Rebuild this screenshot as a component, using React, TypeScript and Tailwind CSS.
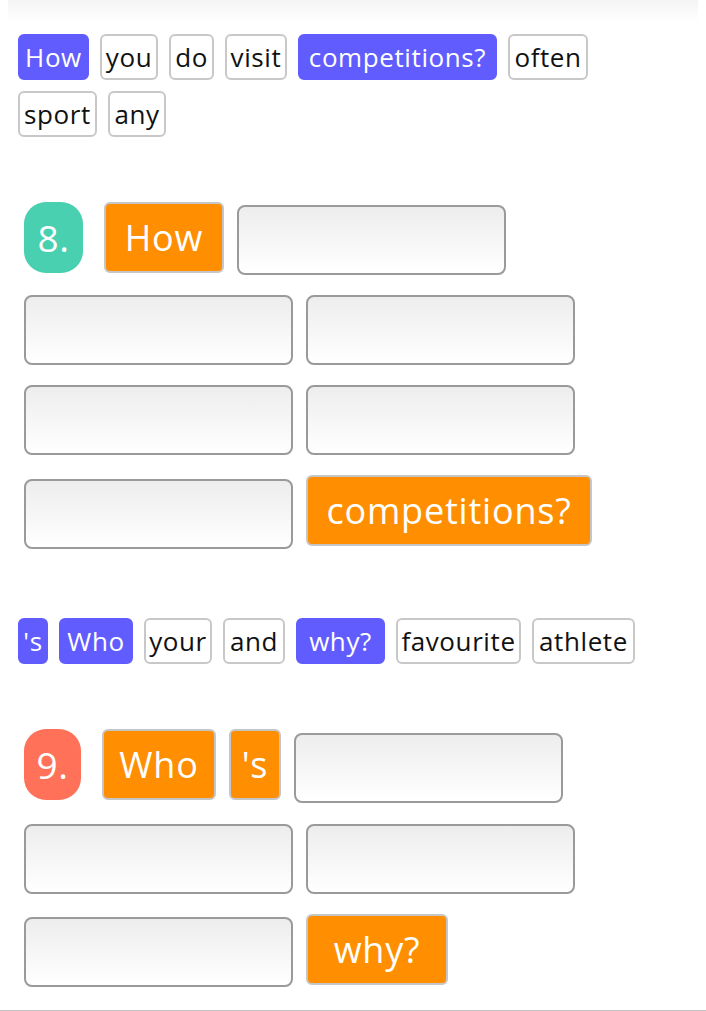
import React from 'react';

const font = { fontFamily: '"Open Sans", "DejaVu Sans", sans-serif' };

type ChipProps = { text: string; w: string; active?: boolean };

function Chip({ text, w, active }: ChipProps) {
  return (
    <div
      className={`${w} h-[46px] flex items-center justify-center rounded-[6px] text-[26px] tracking-[0.6px] leading-none border-2 ${
        active ? 'bg-[#615cfd] border-[#615cfd] text-white' : 'bg-white border-[#c8c8c8] text-[#111]'
      }`}
    >
      {text}
    </div>
  );
}

function Badge({ n, color, w }: { n: string; color: string; w: string }) {
  return (
    <div className={`${color} ${w} h-[71px] rounded-[22px] flex items-center justify-center text-white text-[37px] tracking-[0.5px]`}>
      {n}
    </div>
  );
}

function Word({ text, w }: { text: string; w: string }) {
  return (
    <div className={`${w} h-[71px] bg-[#ff8f00] border-2 border-[#c6c6c6] rounded-[6px] flex items-center justify-center text-white text-[36px] tracking-[0.8px]`}>
      {text}
    </div>
  );
}

function Blank({ mt = 'mt-[3px]' }: { mt?: string }) {
  return (
    <div className={`${mt} w-[269px] h-[70px] border-2 border-[#9a9a9a] rounded-[8px] bg-gradient-to-b from-[#ededed] to-white`} />
  );
}

export default function App() {
  return (
    <div className="w-[706px] h-[1011px] bg-white overflow-hidden" style={font}>
      <div className="h-[22px] bg-gradient-to-b from-[#f4f4f4] to-white mx-[8px]" />

      <div className="mt-[12px] ml-[18px] flex flex-wrap gap-[11px] w-[600px]">
        <Chip text="How" w="w-[71px]" active />
        <Chip text="you" w="w-[58px]" />
        <Chip text="do" w="w-[45px]" />
        <Chip text="visit" w="w-[62px]" />
        <Chip text="competitions?" w="w-[199px]" active />
        <Chip text="often" w="w-[80px]" />
        <Chip text="sport" w="w-[79px]" />
        <Chip text="any" w="w-[58px]" />
      </div>

      <div className="mt-[65px] px-[24px]">
        <div className="flex items-start">
          <Badge n="8." color="bg-[#48d0b0]" w="w-[59px]" />
          <div className="ml-[21px] flex items-start gap-[13px]">
            <Word text="How" w="w-[120px]" />
            <Blank />
          </div>
        </div>
        <div className="mt-[17px] flex items-start gap-[13px]">
          <Blank />
          <Blank />
        </div>
        <div className="mt-[17px] flex items-start gap-[13px]">
          <Blank />
          <Blank />
        </div>
        <div className="mt-[20px] flex items-start gap-[13px]">
          <Blank mt="mt-[4px]" />
          <Word text="competitions?" w="w-[286px]" />
        </div>
      </div>

      <div className="mt-[69px] px-[18px] flex flex-wrap gap-[11px]">
        <Chip text="'s" w="w-[30px]" active />
        <Chip text="Who" w="w-[74px]" active />
        <Chip text="your" w="w-[68px]" />
        <Chip text="and" w="w-[62px]" />
        <Chip text="why?" w="w-[89px]" active />
        <Chip text="favourite" w="w-[125px]" />
        <Chip text="athlete" w="w-[103px]" />
      </div>

      <div className="mt-[65px] px-[24px]">
        <div className="flex items-start">
          <Badge n="9." color="bg-[#ff7158]" w="w-[57px]" />
          <div className="ml-[21px] flex items-start gap-[13px]">
            <Word text="Who" w="w-[114px]" />
            <Word text="'s" w="w-[52px]" />
            <Blank mt="mt-[4px]" />
          </div>
        </div>
        <div className="mt-[18px] flex items-start gap-[13px]">
          <Blank />
          <Blank />
        </div>
        <div className="mt-[20px] flex items-start gap-[13px]">
          <Blank />
          <Word text="why?" w="w-[142px]" />
        </div>
      </div>

      <div className="mt-[23px] h-[2px] bg-[#c2c2c2]" />
    </div>
  );
}
